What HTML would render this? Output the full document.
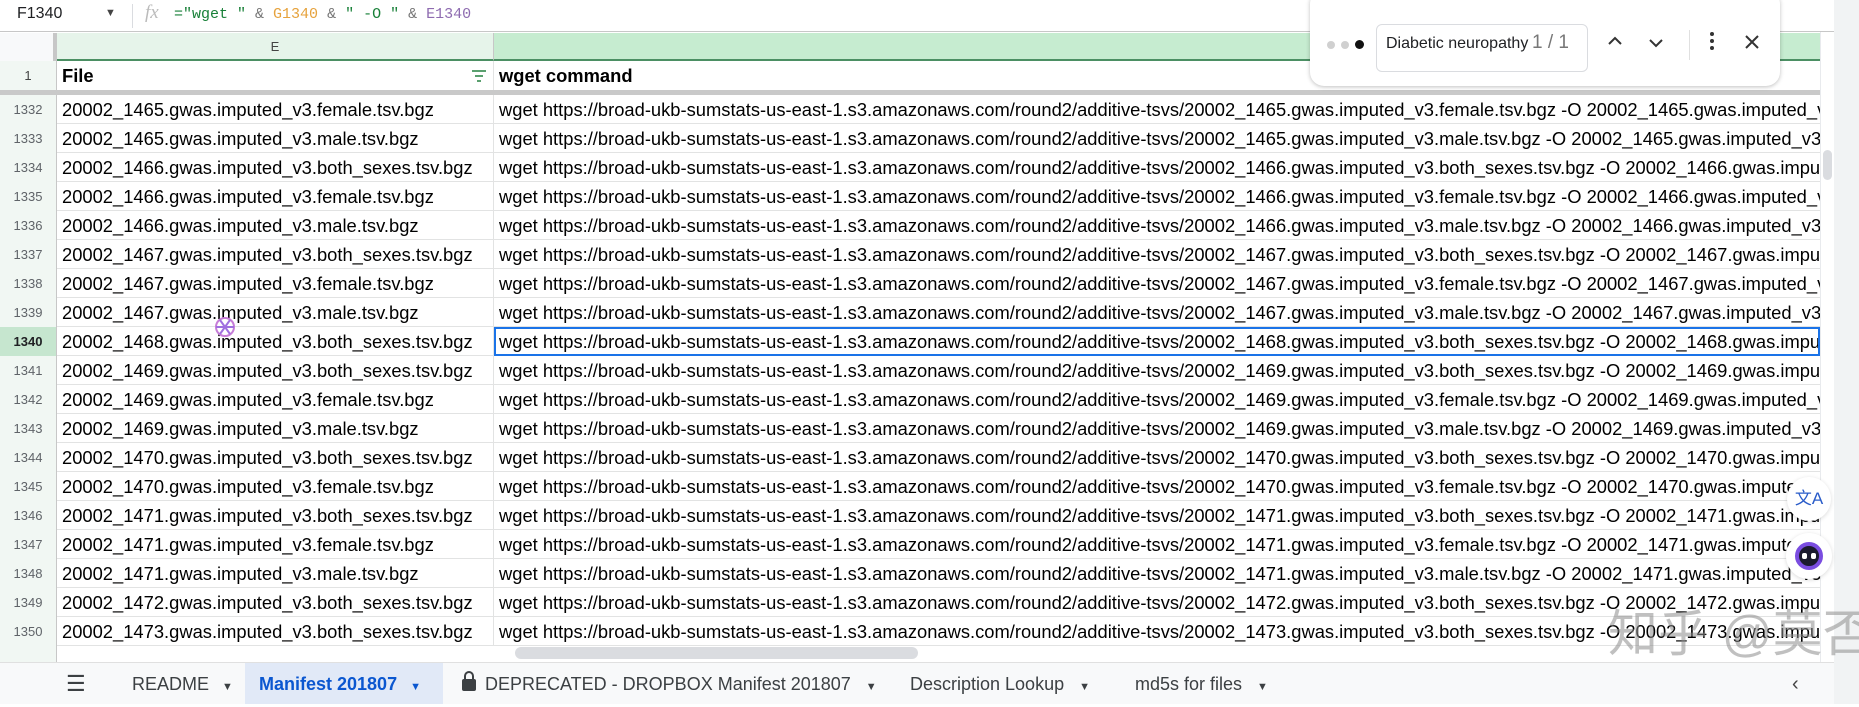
<!DOCTYPE html>
<html><head><meta charset="utf-8">
<style>
*{margin:0;padding:0;box-sizing:border-box}
body{width:1859px;height:704px;overflow:hidden;background:#fff;font-family:"Liberation Sans",Arial,sans-serif;position:relative;color:#000}
.a{position:absolute}
.row{position:absolute;left:0;width:1820px;height:29px;border-bottom:1px solid #e2e3e3}
.rh{position:absolute;left:0;top:0;width:57px;height:29px;background:#f1f7f3;border-right:1px solid #c7c7c7;color:#5f6368;font-size:13px;text-align:center;line-height:30px}
.ce{position:absolute;left:57px;top:0;width:437px;height:29px;border-right:1px solid #e2e3e3;font-size:18.35px;line-height:30px;padding-left:5px;white-space:nowrap;overflow:hidden}
.cf{position:absolute;left:494px;top:0;width:1326px;height:29px;font-size:18.35px;line-height:30px;padding-left:5px;white-space:nowrap;overflow:hidden}
.mono{font-family:"Liberation Mono",monospace}
.tab{position:absolute;top:664px;height:40px;line-height:40px;font-size:18px;color:#3c4043;white-space:nowrap}
</style></head><body>
<div class="a" style="left:0;top:0;width:1859px;height:32px;border-bottom:1px solid #c7c7c7;background:#fff"></div>
<div class="a" style="left:17px;top:5px;font-size:16px;color:#202124">F1340</div>
<div class="a" style="left:105px;top:7px;font-size:11px;color:#444">▼</div>
<div class="a" style="left:132px;top:4px;width:1px;height:24px;background:#dadce0"></div>
<div class="a" style="left:145px;top:2px;font-size:19px;color:#bbb;font-family:'Liberation Serif',serif;font-style:italic">fx</div>
<div class="a mono" style="left:174px;top:6px;font-size:15px;color:#188038;white-space:pre">="wget " <span style="color:#777">&amp;</span> <span style="color:#e6a23c">G1340</span> <span style="color:#777">&amp;</span> " -O " <span style="color:#777">&amp;</span> <span style="color:#8e6bb0">E1340</span></div>
<div class="a" style="left:0;top:33px;width:57px;height:28px;background:#f8f9fa;border-right:4px solid #c7c7c7"></div>
<div class="a" style="left:57px;top:33px;width:437px;height:28px;background:#e6f4ea;border-bottom:2px solid #4b8f63;border-right:1px solid #c7c7c7;text-align:center;font-size:13px;color:#444;line-height:28px">E</div>
<div class="a" style="left:494px;top:33px;width:1326px;height:28px;background:#c6ecd0;border-bottom:2px solid #4b8f63"></div>
<div class="a" style="left:0;top:61px;width:57px;height:29px;background:#f1f7f3;border-right:1px solid #c7c7c7;font-size:13px;color:#444;text-align:center;line-height:30px">1</div>
<div class="a" style="left:57px;top:61px;width:437px;height:29px;border-right:1px solid #e2e3e3;font-size:18.35px;font-weight:bold;line-height:30px;padding-left:5px">File</div>
<div class="a" style="left:472px;top:70px;width:14px;height:2px;background:#5aa06f"></div>
<div class="a" style="left:475px;top:75px;width:8px;height:2px;background:#5aa06f"></div>
<div class="a" style="left:477px;top:80px;width:4px;height:2px;background:#5aa06f"></div>
<div class="a" style="left:494px;top:61px;width:1326px;height:29px;font-size:18.35px;font-weight:bold;line-height:30px;padding-left:5px">wget command</div>
<div class="a" style="left:0;top:90px;width:1820px;height:5px;background:#c9c9c9"></div>
<div class="row" style="top:95px"><div class="rh">1332</div><div class="ce">20002_1465.gwas.imputed_v3.female.tsv.bgz</div><div class="cf">wget https://broad-ukb-sumstats-us-east-1.s3.amazonaws.com/round2/additive-tsvs/20002_1465.gwas.imputed_v3.female.tsv.bgz -O 20002_1465.gwas.imputed_v3.female.tsv.bgz</div></div>
<div class="row" style="top:124px"><div class="rh">1333</div><div class="ce">20002_1465.gwas.imputed_v3.male.tsv.bgz</div><div class="cf">wget https://broad-ukb-sumstats-us-east-1.s3.amazonaws.com/round2/additive-tsvs/20002_1465.gwas.imputed_v3.male.tsv.bgz -O 20002_1465.gwas.imputed_v3.male.tsv.bgz</div></div>
<div class="row" style="top:153px"><div class="rh">1334</div><div class="ce">20002_1466.gwas.imputed_v3.both_sexes.tsv.bgz</div><div class="cf">wget https://broad-ukb-sumstats-us-east-1.s3.amazonaws.com/round2/additive-tsvs/20002_1466.gwas.imputed_v3.both_sexes.tsv.bgz -O 20002_1466.gwas.imputed_v3.both_sexes.tsv.bgz</div></div>
<div class="row" style="top:182px"><div class="rh">1335</div><div class="ce">20002_1466.gwas.imputed_v3.female.tsv.bgz</div><div class="cf">wget https://broad-ukb-sumstats-us-east-1.s3.amazonaws.com/round2/additive-tsvs/20002_1466.gwas.imputed_v3.female.tsv.bgz -O 20002_1466.gwas.imputed_v3.female.tsv.bgz</div></div>
<div class="row" style="top:211px"><div class="rh">1336</div><div class="ce">20002_1466.gwas.imputed_v3.male.tsv.bgz</div><div class="cf">wget https://broad-ukb-sumstats-us-east-1.s3.amazonaws.com/round2/additive-tsvs/20002_1466.gwas.imputed_v3.male.tsv.bgz -O 20002_1466.gwas.imputed_v3.male.tsv.bgz</div></div>
<div class="row" style="top:240px"><div class="rh">1337</div><div class="ce">20002_1467.gwas.imputed_v3.both_sexes.tsv.bgz</div><div class="cf">wget https://broad-ukb-sumstats-us-east-1.s3.amazonaws.com/round2/additive-tsvs/20002_1467.gwas.imputed_v3.both_sexes.tsv.bgz -O 20002_1467.gwas.imputed_v3.both_sexes.tsv.bgz</div></div>
<div class="row" style="top:269px"><div class="rh">1338</div><div class="ce">20002_1467.gwas.imputed_v3.female.tsv.bgz</div><div class="cf">wget https://broad-ukb-sumstats-us-east-1.s3.amazonaws.com/round2/additive-tsvs/20002_1467.gwas.imputed_v3.female.tsv.bgz -O 20002_1467.gwas.imputed_v3.female.tsv.bgz</div></div>
<div class="row" style="top:298px"><div class="rh">1339</div><div class="ce">20002_1467.gwas.imputed_v3.male.tsv.bgz</div><div class="cf">wget https://broad-ukb-sumstats-us-east-1.s3.amazonaws.com/round2/additive-tsvs/20002_1467.gwas.imputed_v3.male.tsv.bgz -O 20002_1467.gwas.imputed_v3.male.tsv.bgz</div></div>
<div class="row" style="top:327px"><div class="rh" style="background:#c6e6cf;color:#202124;font-weight:bold">1340</div><div class="ce">20002_1468.gwas.imputed_v3.both_sexes.tsv.bgz</div><div class="cf" style="border:2px solid #1a73e8;padding-left:3px;line-height:26px">wget https://broad-ukb-sumstats-us-east-1.s3.amazonaws.com/round2/additive-tsvs/20002_1468.gwas.imputed_v3.both_sexes.tsv.bgz -O 20002_1468.gwas.imputed_v3.both_sexes.tsv.bgz</div></div>
<div class="row" style="top:356px"><div class="rh">1341</div><div class="ce">20002_1469.gwas.imputed_v3.both_sexes.tsv.bgz</div><div class="cf">wget https://broad-ukb-sumstats-us-east-1.s3.amazonaws.com/round2/additive-tsvs/20002_1469.gwas.imputed_v3.both_sexes.tsv.bgz -O 20002_1469.gwas.imputed_v3.both_sexes.tsv.bgz</div></div>
<div class="row" style="top:385px"><div class="rh">1342</div><div class="ce">20002_1469.gwas.imputed_v3.female.tsv.bgz</div><div class="cf">wget https://broad-ukb-sumstats-us-east-1.s3.amazonaws.com/round2/additive-tsvs/20002_1469.gwas.imputed_v3.female.tsv.bgz -O 20002_1469.gwas.imputed_v3.female.tsv.bgz</div></div>
<div class="row" style="top:414px"><div class="rh">1343</div><div class="ce">20002_1469.gwas.imputed_v3.male.tsv.bgz</div><div class="cf">wget https://broad-ukb-sumstats-us-east-1.s3.amazonaws.com/round2/additive-tsvs/20002_1469.gwas.imputed_v3.male.tsv.bgz -O 20002_1469.gwas.imputed_v3.male.tsv.bgz</div></div>
<div class="row" style="top:443px"><div class="rh">1344</div><div class="ce">20002_1470.gwas.imputed_v3.both_sexes.tsv.bgz</div><div class="cf">wget https://broad-ukb-sumstats-us-east-1.s3.amazonaws.com/round2/additive-tsvs/20002_1470.gwas.imputed_v3.both_sexes.tsv.bgz -O 20002_1470.gwas.imputed_v3.both_sexes.tsv.bgz</div></div>
<div class="row" style="top:472px"><div class="rh">1345</div><div class="ce">20002_1470.gwas.imputed_v3.female.tsv.bgz</div><div class="cf">wget https://broad-ukb-sumstats-us-east-1.s3.amazonaws.com/round2/additive-tsvs/20002_1470.gwas.imputed_v3.female.tsv.bgz -O 20002_1470.gwas.imputed_v3.female.tsv.bgz</div></div>
<div class="row" style="top:501px"><div class="rh">1346</div><div class="ce">20002_1471.gwas.imputed_v3.both_sexes.tsv.bgz</div><div class="cf">wget https://broad-ukb-sumstats-us-east-1.s3.amazonaws.com/round2/additive-tsvs/20002_1471.gwas.imputed_v3.both_sexes.tsv.bgz -O 20002_1471.gwas.imputed_v3.both_sexes.tsv.bgz</div></div>
<div class="row" style="top:530px"><div class="rh">1347</div><div class="ce">20002_1471.gwas.imputed_v3.female.tsv.bgz</div><div class="cf">wget https://broad-ukb-sumstats-us-east-1.s3.amazonaws.com/round2/additive-tsvs/20002_1471.gwas.imputed_v3.female.tsv.bgz -O 20002_1471.gwas.imputed_v3.female.tsv.bgz</div></div>
<div class="row" style="top:559px"><div class="rh">1348</div><div class="ce">20002_1471.gwas.imputed_v3.male.tsv.bgz</div><div class="cf">wget https://broad-ukb-sumstats-us-east-1.s3.amazonaws.com/round2/additive-tsvs/20002_1471.gwas.imputed_v3.male.tsv.bgz -O 20002_1471.gwas.imputed_v3.male.tsv.bgz</div></div>
<div class="row" style="top:588px"><div class="rh">1349</div><div class="ce">20002_1472.gwas.imputed_v3.both_sexes.tsv.bgz</div><div class="cf">wget https://broad-ukb-sumstats-us-east-1.s3.amazonaws.com/round2/additive-tsvs/20002_1472.gwas.imputed_v3.both_sexes.tsv.bgz -O 20002_1472.gwas.imputed_v3.both_sexes.tsv.bgz</div></div>
<div class="row" style="top:617px"><div class="rh">1350</div><div class="ce">20002_1473.gwas.imputed_v3.both_sexes.tsv.bgz</div><div class="cf">wget https://broad-ukb-sumstats-us-east-1.s3.amazonaws.com/round2/additive-tsvs/20002_1473.gwas.imputed_v3.both_sexes.tsv.bgz -O 20002_1473.gwas.imputed_v3.both_sexes.tsv.bgz</div></div>
<div class="a" style="left:0;top:646px;width:57px;height:16px;background:#f1f7f3;border-right:1px solid #c7c7c7"></div>
<div class="a" style="left:515px;top:647px;width:403px;height:12px;border-radius:6px;background:#dadce0"></div>
<div class="a" style="left:1820px;top:32px;width:14px;height:630px;background:#fff;border-left:1px solid #e8eaed"></div>
<div class="a" style="left:1823px;top:150px;width:9px;height:30px;border-radius:5px;background:#dadce0"></div>
<div class="a" style="left:1834px;top:0;width:25px;height:704px;background:#f1f3f4"></div>
<div class="a" style="left:0;top:662px;width:1834px;height:42px;background:#f8f9fa;border-top:1px solid #e0e0e0"></div>
<div class="tab" style="left:66px;font-size:22px">☰</div>
<div class="tab" style="left:132px">README <span style="font-size:11px;margin-left:8px">▼</span></div>
<div class="a" style="left:245px;top:663px;width:198px;height:41px;background:#e1e9f7"></div>
<div class="tab" style="left:259px;color:#0b57d0;font-weight:bold">Manifest 201807 <span style="font-size:11px;margin-left:8px">▼</span></div>
<div class="a" style="left:462px;top:679px;width:14px;height:12px;background:#3c4043;border-radius:2px"></div>
<div class="a" style="left:464px;top:671px;width:10px;height:11px;border:2px solid #3c4043;border-radius:5px 5px 0 0;border-bottom:none"></div>
<div class="tab" style="left:485px">DEPRECATED - DROPBOX Manifest 201807 <span style="font-size:11px;margin-left:10px">▼</span></div>
<div class="tab" style="left:910px">Description Lookup <span style="font-size:11px;margin-left:10px">▼</span></div>
<div class="tab" style="left:1135px">md5s for files <span style="font-size:11px;margin-left:10px">▼</span></div>
<div class="tab" style="left:1792px;font-size:20px;color:#444">‹</div>
<div class="a" style="left:1310px;top:-10px;width:470px;height:96px;background:#fff;border-radius:14px;box-shadow:0 1px 4px rgba(0,0,0,.25)"></div>
<div class="a" style="left:1327px;top:41px;width:8px;height:8px;border-radius:50%;background:#d0d0d0"></div>
<div class="a" style="left:1341px;top:41px;width:8px;height:8px;border-radius:50%;background:#d0d0d0"></div>
<div class="a" style="left:1355px;top:40px;width:9px;height:9px;border-radius:50%;background:#111"></div>
<div class="a" style="left:1376px;top:24px;width:212px;height:48px;border:1px solid #dadce0;border-radius:6px"></div>
<div class="a" style="left:1386px;top:35px;width:145px;overflow:hidden;white-space:nowrap;font-size:16px;color:#202124">Diabetic neuropathy</div>
<div class="a" style="left:1532px;top:32px;font-size:19px;color:#777">1 / 1</div>
<svg class="a" style="left:1605px;top:34px" width="20" height="14"><path d="M4 10 L10 4 L16 10" fill="none" stroke="#333" stroke-width="2"/></svg>
<svg class="a" style="left:1646px;top:36px" width="20" height="14"><path d="M4 4 L10 10 L16 4" fill="none" stroke="#333" stroke-width="2"/></svg>
<div class="a" style="left:1689px;top:30px;width:1px;height:30px;background:#e0e0e0"></div>
<div class="a" style="left:1710px;top:32px;width:4px;height:4px;border-radius:50%;background:#333;box-shadow:0 7px 0 #333,0 14px 0 #333"></div>
<svg class="a" style="left:1744px;top:34px" width="16" height="16"><path d="M2 2 L14 14 M14 2 L2 14" stroke="#333" stroke-width="2"/></svg>
<div class="a" style="left:1787px;top:477px;width:44px;height:44px;border-radius:50%;background:#fff;box-shadow:0 1px 4px rgba(0,0,0,.15);color:#2a5cc9;font-size:17px;text-align:center;line-height:44px;font-family:'Liberation Sans','Noto Sans CJK SC',sans-serif">文A</div>
<div class="a" style="left:1786px;top:533px;width:46px;height:46px;border-radius:50%;background:#fff;box-shadow:0 1px 4px rgba(0,0,0,.15)"></div>
<div class="a" style="left:1795px;top:542px;width:28px;height:28px;border-radius:50%;border:4px solid #7a4de0;background:#1a1a2e"></div>
<div class="a" style="left:1802px;top:553px;width:5px;height:6px;background:#fff;border-radius:2px"></div>
<div class="a" style="left:1811px;top:553px;width:5px;height:6px;background:#fff;border-radius:2px"></div>
<div class="a" style="left:1608px;top:594px;font-size:50px;color:rgba(140,140,140,.55);white-space:nowrap;font-family:'Liberation Sans','Noto Sans CJK SC',sans-serif">知乎 @莫否</div>
<svg class="a" style="left:212px;top:314px" width="26" height="26" viewBox="0 0 26 26"><g fill="none" stroke-width="2"><circle cx="13" cy="13" r="9" stroke="#c77dd8"/><path d="M8 6 L18 20 M18 6 L8 20 M4 13 L22 13" stroke="#a070e0"/></g></svg>
</body></html>
